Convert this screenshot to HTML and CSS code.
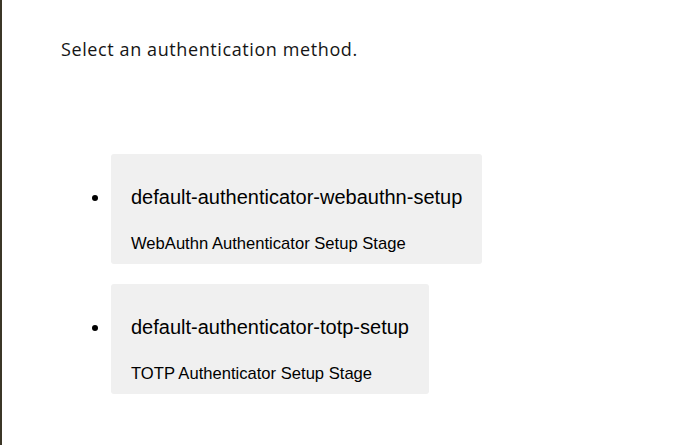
FILE: index.html
```html
<!DOCTYPE html>
<html lang="en">
<head>
  <meta charset="UTF-8">
  <meta name="viewport" content="width=device-width, initial-scale=1.0">
  <title>Authenticator Validation</title>
  <link rel="stylesheet" href="styles.css">
</head>
<body>
  <div class="panel">
    <p class="prompt">Select an authentication method.</p>

    <ul class="method-list">
      <li>
        <div class="method-card">
          <div class="method-name">default-authenticator-webauthn-setup</div>
          <div class="method-desc">WebAuthn Authenticator Setup Stage</div>
        </div>
      </li>
      <li>
        <div class="method-card">
          <div class="method-name">default-authenticator-totp-setup</div>
          <div class="method-desc">TOTP Authenticator Setup Stage</div>
        </div>
      </li>
    </ul>
  </div>
</body>
</html>
```

FILE: styles.css
```css
* {
  margin: 0;
  padding: 0;
  box-sizing: border-box;
}

body {
  height: 100vh;
  background-color: #fff;
  border-left: 2px solid #3b3627; /* background peeking through on the left */
  overflow: hidden;
}

.panel {
  padding: 38px 0 0 59px;
}

.prompt {
  font-family: 'Open Sans', sans-serif;
  font-size: 18px;
  letter-spacing: 0.6px;
  line-height: 22px;
  color: #151515;
}

.method-list {
  display: flex;
  flex-direction: column;
  align-items: flex-start;
  gap: 20px;
  margin-top: 94px;
  padding-left: 50px;
  font-family: 'Liberation Sans', Arial, sans-serif;
  color: #000;
}

.method-list li {
  font-size: 20px;
}

.method-card {
  width: fit-content;
  background-color: #f0f0f0;
  border-radius: 3px;
  padding: 31px 20px 10px 20px;
}

.method-name {
  font-size: 20px;
  line-height: 24px;
}

.method-desc {
  font-size: 16.6px;
  line-height: 20px;
  margin-top: 25px;
}
```
